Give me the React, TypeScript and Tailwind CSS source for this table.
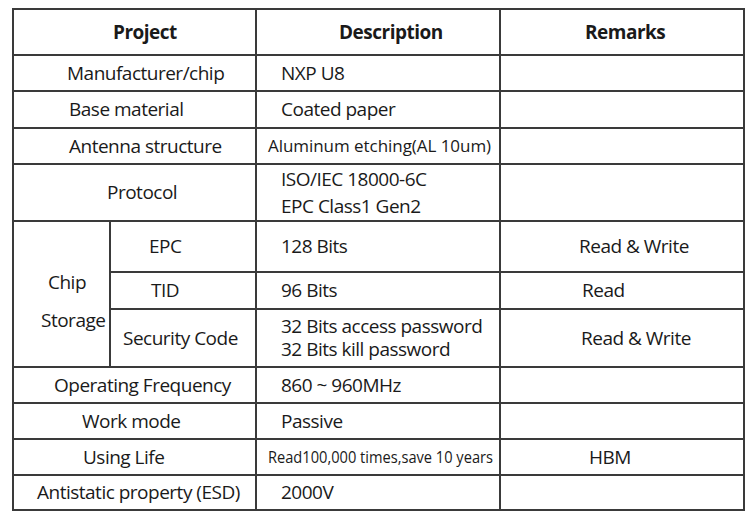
const cell = "bg-white flex items-center whitespace-nowrap text-[19px] tracking-[-0.5px] text-[#1a1a1a]";

export default function App() {
  return (
    <div className="w-[750px] h-[518px] bg-white pt-[8px] pl-[12px]" style={{ fontFamily: '"Open Sans", "Liberation Sans", sans-serif' }}>
      <div className="grid w-[733px] grid-cols-[95px_144px_242px_242px] grid-rows-[44px_34px_35px_34px_55px_49px_35px_56px_34px_34px_34px_33px] gap-[2px] p-[2px] bg-[#3a3a3a]">
        {/* header */}
        <div className={`${cell} col-span-2 pl-[99px] font-bold`}>Project</div>
        <div className={`${cell} pl-[82px] font-bold`}>Description</div>
        <div className={`${cell} pl-[84px] font-bold`}>Remarks</div>

        <div className={`${cell} col-span-2 pl-[53px]`}>Manufacturer/chip</div>
        <div className={`${cell} pl-[24px]`}>NXP U8</div>
        <div className={cell}></div>

        <div className={`${cell} col-span-2 pl-[55px]`}>Base material</div>
        <div className={`${cell} pl-[24px]`}>Coated paper</div>
        <div className={cell}></div>

        <div className={`${cell} col-span-2 pl-[55px]`}>Antenna structure</div>
        <div className={`${cell} pl-[11px]`}>
          <span className="inline-block text-[17px] tracking-[-0.05px]">Aluminum etching(AL 10um)</span>
        </div>
        <div className={cell}></div>

        <div className={`${cell} col-span-2 pl-[93px]`}>Protocol</div>
        <div className={`${cell} pl-[24px] leading-[27px]`}>
          <div>
            <div>ISO/IEC 18000-6C</div>
            <div>EPC Class1 Gen2</div>
          </div>
        </div>
        <div className={cell}></div>

        {/* chip storage */}
        <div className={`${cell} row-span-3 leading-[38px] pt-[14px]`}>
          <div>
            <div className="pl-[34px]">Chip</div>
            <div className="pl-[27px]">Storage</div>
          </div>
        </div>
        <div className={`${cell} pl-[38px]`}>EPC</div>
        <div className={`${cell} pl-[24px]`}>128 Bits</div>
        <div className={`${cell} pl-[78px]`}>Read &amp; Write</div>

        <div className={`${cell} pl-[40px]`}>TID</div>
        <div className={`${cell} pl-[24px]`}>96 Bits</div>
        <div className={`${cell} pl-[81px]`}>Read</div>

        <div className={`${cell} pl-[12px]`}>Security Code</div>
        <div className={`${cell} pl-[24px] leading-[23px]`}>
          <div>
            <div>32 Bits access password</div>
            <div>32 Bits kill password</div>
          </div>
        </div>
        <div className={`${cell} pl-[80px]`}>Read &amp; Write</div>

        <div className={`${cell} col-span-2 pl-[40px]`}>Operating Frequency</div>
        <div className={`${cell} pl-[24px]`}>860 ~ 960MHz</div>
        <div className={cell}></div>

        <div className={`${cell} col-span-2 pl-[68px]`}>Work mode</div>
        <div className={`${cell} pl-[24px]`}>Passive</div>
        <div className={cell}></div>

        <div className={`${cell} col-span-2 pl-[69px]`}>Using Life</div>
        <div className={`${cell} pl-[11px]`}>
          <span className="inline-block origin-left scale-x-[0.86] text-[17px] tracking-normal">Read100,000 times,save 10 years</span>
        </div>
        <div className={`${cell} pl-[88px]`}>HBM</div>

        <div className={`${cell} col-span-2 pl-[23px]`}>Antistatic property (ESD)</div>
        <div className={`${cell} pl-[24px]`}>2000V</div>
        <div className={cell}></div>
      </div>
    </div>
  );
}
